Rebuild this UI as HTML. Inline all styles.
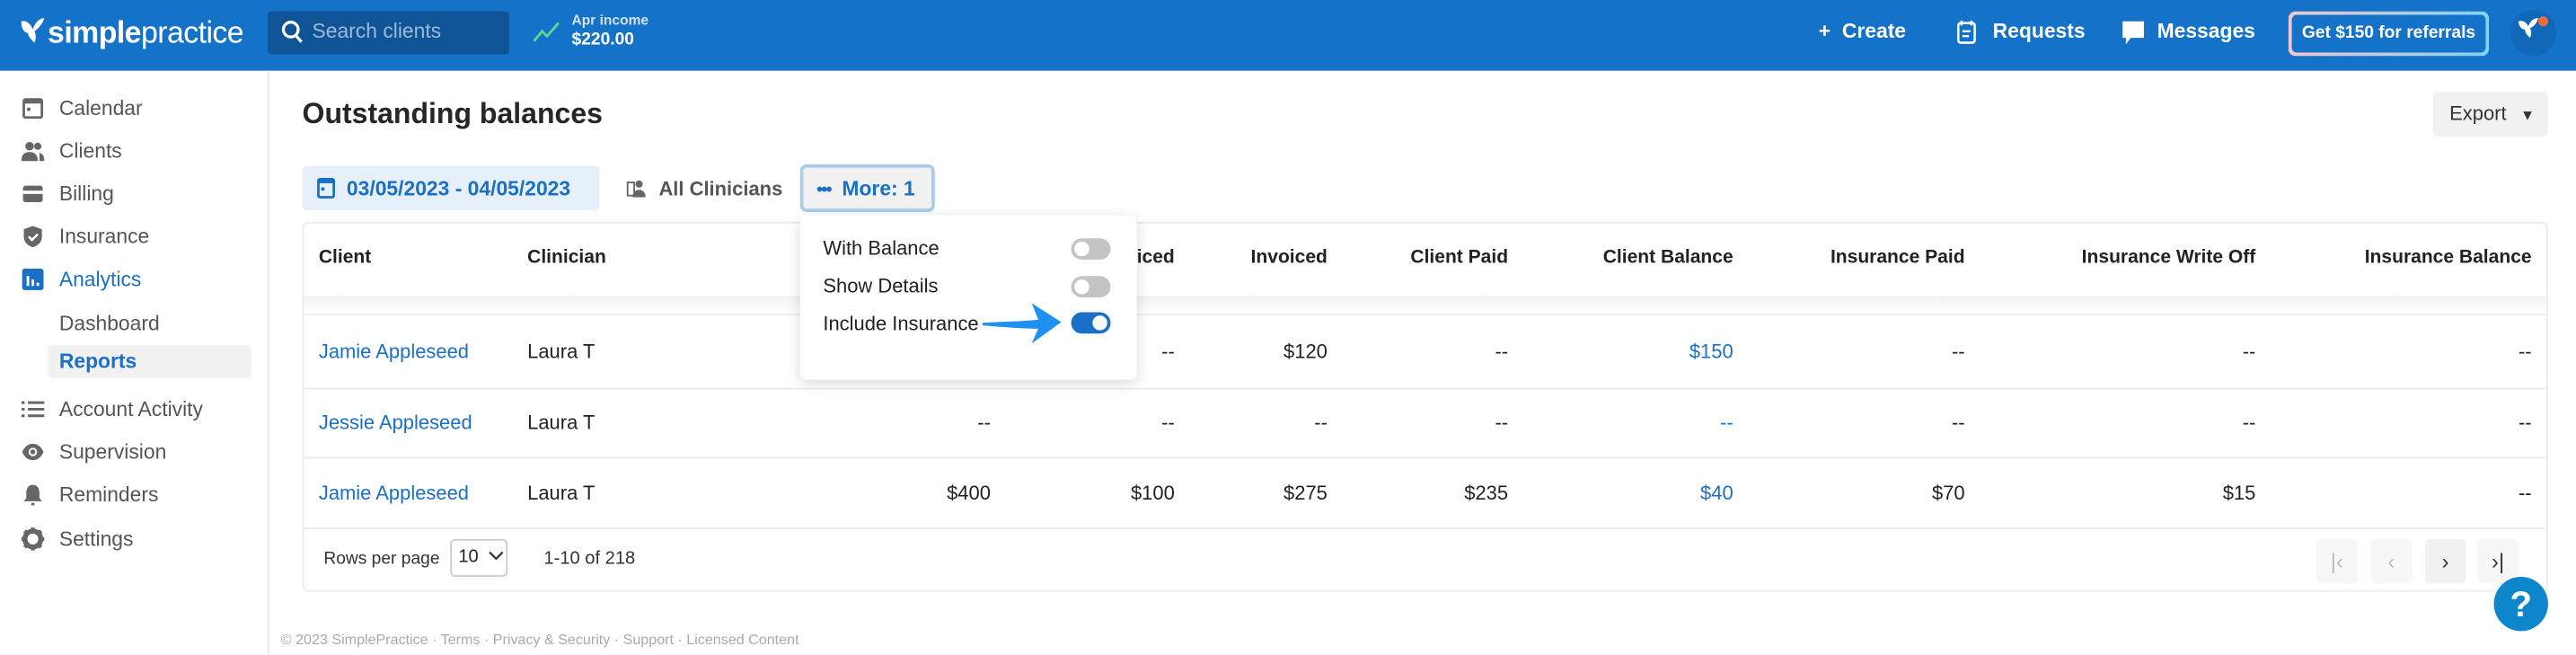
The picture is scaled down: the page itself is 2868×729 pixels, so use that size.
<!DOCTYPE html>
<html><head><meta charset="utf-8"><style>
*{box-sizing:border-box;margin:0;padding:0}
html,body{width:2868px;height:728px;overflow:hidden;background:#fff}
#w{position:absolute;left:0;top:0;width:1568px;height:398px;transform:scale(1.82908);transform-origin:0 0;font-family:"Liberation Sans",sans-serif;color:#222;font-size:12px}
.a{position:absolute;white-space:nowrap}
.nav{position:absolute;left:0;top:0;width:1568px;height:42.6px;background:#1572c9}
.w{color:#fff}
.side{color:#555;font-size:12.5px}
.ico{position:absolute;left:13px;width:14px;height:14px}
.th{font-weight:bold;font-size:11.5px;color:#222}
.r{text-align:right;transform:translateX(-100%)}
.bl{color:#1a6fc6}
.line{position:absolute;left:184px;width:1367px;height:1px;background:#ececec}
.tg{position:absolute;left:652px;width:24px;height:13px;border-radius:7px;background:#c4c4c4}
.tg:after{content:"";position:absolute;left:2px;top:2px;width:9px;height:9px;border-radius:50%;background:#fff}
.tg.on{background:#1a6fc6}
.tg.on:after{left:13px}
.pb{position:absolute;top:328px;width:25px;height:27px;border-radius:3px;background:#f7f7f7;color:#bbb;text-align:center;line-height:27px;font-size:13px}
</style></head><body><div id="w">
<div class="nav"></div>
<svg class="a" style="left:12px;top:10px" width="18" height="18" viewBox="0 0 18 18"><path d="M1 3c3-1 6 2 7 5 1-4 4-7 7-7-1 3-3 6-6 8 1 2 1 5 0 7-2-2-4-4-4-6-2 0-4-2-4-7z" fill="#fff"/></svg>
<div class="a w" style="left:29px;top:9px;font-size:18.5px;letter-spacing:-0.3px"><b>simple</b>practice</div>
<div class="a" style="left:163px;top:6.5px;width:147px;height:26px;background:#0f5497;border-radius:2px"></div>
<svg class="a" style="left:171px;top:12px" width="14" height="15" viewBox="0 0 14 15"><circle cx="6" cy="6" r="4.5" fill="none" stroke="#fff" stroke-width="1.8"/><path d="M9 9.5l3.5 4" stroke="#fff" stroke-width="1.8"/></svg>
<div class="a" style="left:190px;top:12px;font-size:12.5px;color:#9fb8d6">Search clients</div>
<svg class="a" style="left:324px;top:13px" width="18" height="14"><path d="M1 12l5-6 3 3 7-8" fill="none" stroke="#5fd39a" stroke-width="1.6"/></svg>
<div class="a w" style="left:348px;top:7px;font-size:8.5px;font-weight:bold;color:#cfe1f5">Apr income</div>
<div class="a w" style="left:348px;top:18px;font-size:10.5px;font-weight:bold">$220.00</div>
<div class="a w" style="left:1107px;top:12px;font-size:12.5px;font-weight:bold">+&nbsp; Create</div>
<svg class="a" style="left:1191px;top:12px" width="12" height="15"><rect x="1" y="2" width="10" height="12" rx="1.5" fill="none" stroke="#fff" stroke-width="1.4"/><path d="M3 0.5v3M9 0.5v3M3.5 7h5M3.5 10h4" stroke="#fff" stroke-width="1.3"/></svg>
<div class="a w" style="left:1213px;top:12px;font-size:12.5px;font-weight:bold">Requests</div>
<svg class="a" style="left:1291px;top:12px" width="15" height="16"><path d="M1 1h13v10H6l-3 4v-4H1z" fill="#fff"/></svg>
<div class="a w" style="left:1313px;top:12px;font-size:12.5px;font-weight:bold">Messages</div>
<div class="a" style="left:1393px;top:6.5px;width:122px;height:27px;border-radius:4px;padding:2px;background:linear-gradient(90deg,#f4c6cf,#7fd3ef)"><div style="width:100%;height:100%;background:#1572c9;border-radius:3px;color:#fff;font-size:10.5px;font-weight:bold;text-align:center;line-height:23px">Get $150 for referrals</div></div>
<div class="a" style="left:1528px;top:6px;width:28px;height:28px;border-radius:50%;background:#1268b8"></div>
<svg class="a" style="left:1531px;top:9px" width="22" height="20"><path d="M2 4c3-1 5 1 6 3 1-3 3-5 6-5-1 3-2 5-5 6 1 2 1 4 0 6-2-2-3-3-3-5-2 0-4-2-4-5z" fill="#fff"/><circle cx="17" cy="4" r="3" fill="#f36b3c"/></svg>

<div class="a" style="left:163px;top:42.6px;width:1px;height:356px;background:#ececec"></div>
<svg class="ico" style="top:59px" viewBox="0 0 14 14"><rect x="1.5" y="1.5" width="11" height="11" rx="1" fill="none" stroke="#666" stroke-width="1.5"/><rect x="1.5" y="1.5" width="11" height="2.5" fill="#666"/><rect x="3.5" y="6.5" width="2" height="2" fill="#666"/></svg>
<div class="a side" style="left:36px;top:59px">Calendar</div>
<svg class="ico" style="top:85px" viewBox="0 0 14 14"><circle cx="5" cy="4" r="2.6" fill="#666"/><path d="M0 13c0-4 2-5.5 5-5.5s5 1.5 5 5.5z" fill="#666"/><circle cx="10" cy="4" r="2.2" fill="#666"/><path d="M11 8c2 .5 3 2 3 5h-3z" fill="#666"/></svg>
<div class="a side" style="left:36px;top:85px">Clients</div>
<svg class="ico" style="top:111px" viewBox="0 0 14 14"><rect x="1" y="2" width="12" height="10" rx="1.5" fill="#666"/><rect x="1" y="5" width="12" height="2" fill="#fff"/></svg>
<div class="a side" style="left:36px;top:111px">Billing</div>
<svg class="ico" style="top:137px" viewBox="0 0 14 14"><path d="M7 0.5l5.5 2v4.5c0 3.5-2.5 5.5-5.5 6.5C4 12.5 1.5 10.5 1.5 7V2.5z" fill="#666"/><path d="M4.5 7l2 2 3.5-3.5" fill="none" stroke="#fff" stroke-width="1.4"/></svg>
<div class="a side" style="left:36px;top:137px">Insurance</div>
<svg class="ico" style="top:163px" viewBox="0 0 14 14"><rect x="0.5" y="0.5" width="13" height="13" rx="1.5" fill="#1a6fc6"/><path d="M4 5v6M7 7v4M10 9v2" stroke="#fff" stroke-width="1.6"/></svg>
<div class="a side bl" style="left:36px;top:163px">Analytics</div>
<div class="a side" style="left:36px;top:190px">Dashboard</div>
<div class="a" style="left:29px;top:209.5px;width:124px;height:20px;background:#f1f1f1;border-radius:3px"></div>
<div class="a side bl" style="left:36px;top:213px;font-weight:bold">Reports</div>
<svg class="ico" style="top:242px" viewBox="0 0 14 14"><path d="M0 3h2M4 3h10M0 7h2M4 7h10M0 11h2M4 11h10" stroke="#666" stroke-width="1.6"/></svg>
<div class="a side" style="left:36px;top:242px">Account Activity</div>
<svg class="ico" style="top:268px" viewBox="0 0 14 14"><path d="M0.5 7C2 3.5 4.5 2 7 2s5 1.5 6.5 5C12 10.5 9.5 12 7 12S2 10.5 0.5 7z" fill="#666"/><circle cx="7" cy="7" r="2.6" fill="#fff"/><circle cx="7" cy="7" r="1.5" fill="#666"/></svg>
<div class="a side" style="left:36px;top:268px">Supervision</div>
<svg class="ico" style="top:294px" viewBox="0 0 14 14"><path d="M7 1c3 0 4 2.5 4 5v3l1.5 2h-11L3 9V6c0-2.5 1-5 4-5z" fill="#666"/><rect x="6" y="12" width="2" height="1.5" fill="#666"/></svg>
<div class="a side" style="left:36px;top:294px">Reminders</div>
<svg class="ico" style="top:321px" viewBox="0 0 14 14"><circle cx="7" cy="7" r="4.8" fill="none" stroke="#666" stroke-width="3"/><path d="M7 0v3M7 11v3M0 7h3M11 7h3M2 2l2 2M10 10l2 2M12 2l-2 2M2 12l2-2" stroke="#666" stroke-width="2.4"/></svg>
<div class="a side" style="left:36px;top:321px">Settings</div>

<div class="a" style="left:184px;top:59px;font-size:17.5px;font-weight:bold;color:#262626">Outstanding balances</div>
<div class="a" style="left:1481px;top:56px;width:70px;height:27px;background:#f1f1f1;border-radius:3px;font-size:12px;line-height:27px;padding-left:10px;color:#333">Export <span style="font-size:9px;margin-left:5px">▼</span></div>

<div class="a" style="left:184px;top:101px;width:181px;height:27px;background:#e6f0fa;border-radius:3px"></div>
<svg class="a" style="left:193px;top:108px" width="11" height="13"><rect x="0.8" y="1" width="9.4" height="11" rx="1" fill="none" stroke="#1a6fc6" stroke-width="1.5"/><rect x="0.8" y="1" width="9.4" height="2.5" fill="#1a6fc6"/><rect x="2.5" y="6" width="2" height="2" fill="#1a6fc6"/></svg>
<div class="a bl" style="left:211px;top:108px;font-size:12.5px;font-weight:bold">03/05/2023 - 04/05/2023</div>
<svg class="a" style="left:381px;top:108px" width="12" height="12"><rect x="1" y="3" width="4" height="8" fill="none" stroke="#666"/><circle cx="8" cy="4" r="2.2" fill="#666"/><path d="M4 12c0-3 2-4.5 4-4.5s4 1.5 4 4.5z" fill="#666"/></svg>
<div class="a" style="left:401px;top:108px;font-size:12px;font-weight:bold;color:#555">All Clinicians</div>
<div class="a" style="left:487px;top:100px;width:82px;height:29px;border:2px solid #a9cbed;border-radius:4px;background:#f1f1f1"></div>
<div class="a bl" style="left:497px;top:108px;font-size:12.5px;font-weight:bold"><span style="letter-spacing:-1px;font-size:11px">•••</span>&nbsp; More: 1</div>

<div class="a" style="left:184px;top:135px;width:1367px;height:225px;border:1px solid #ececec;border-radius:4px"></div>
<div class="a" style="left:185px;top:180px;width:1365px;height:10px;background:linear-gradient(#f2f2f2,#fff)"></div>
<div class="line" style="top:191px"></div>
<div class="line" style="top:236px"></div>
<div class="line" style="top:278px"></div>
<div class="line" style="top:321px"></div>

<div class="a th" style="left:194px;top:151px">Client</div>
<div class="a th" style="left:321px;top:151px">Clinician</div>
<div class="a th r" style="left:715px;top:151px">Uninvoiced</div>
<div class="a th r" style="left:808px;top:151px">Invoiced</div>
<div class="a th r" style="left:918px;top:151px">Client Paid</div>
<div class="a th r" style="left:1055px;top:151px">Client Balance</div>
<div class="a th r" style="left:1196px;top:151px">Insurance Paid</div>
<div class="a th r" style="left:1373px;top:151px">Insurance Write Off</div>
<div class="a th r" style="left:1541px;top:151px">Insurance Balance</div>

<div class="a bl" style="left:194px;top:207px">Jamie Appleseed</div><div class="a" style="left:321px;top:207px">Laura T</div>
<div class="a r" style="left:603px;top:207px">$50</div><div class="a r" style="left:715px;top:207px">--</div><div class="a r" style="left:808px;top:207px">$120</div><div class="a r" style="left:918px;top:207px">--</div><div class="a r bl" style="left:1055px;top:207px">$150</div><div class="a r" style="left:1196px;top:207px">--</div><div class="a r" style="left:1373px;top:207px">--</div><div class="a r" style="left:1541px;top:207px">--</div>
<div class="a bl" style="left:194px;top:250px">Jessie Appleseed</div><div class="a" style="left:321px;top:250px">Laura T</div>
<div class="a r" style="left:603px;top:250px">--</div><div class="a r" style="left:715px;top:250px">--</div><div class="a r" style="left:808px;top:250px">--</div><div class="a r" style="left:918px;top:250px">--</div><div class="a r bl" style="left:1055px;top:250px">--</div><div class="a r" style="left:1196px;top:250px">--</div><div class="a r" style="left:1373px;top:250px">--</div><div class="a r" style="left:1541px;top:250px">--</div>
<div class="a bl" style="left:194px;top:293px">Jamie Appleseed</div><div class="a" style="left:321px;top:293px">Laura T</div>
<div class="a r" style="left:603px;top:293px">$400</div><div class="a r" style="left:715px;top:293px">$100</div><div class="a r" style="left:808px;top:293px">$275</div><div class="a r" style="left:918px;top:293px">$235</div><div class="a r bl" style="left:1055px;top:293px">$40</div><div class="a r" style="left:1196px;top:293px">$70</div><div class="a r" style="left:1373px;top:293px">$15</div><div class="a r" style="left:1541px;top:293px">--</div>

<div class="a" style="left:197px;top:334px;font-size:10.5px;color:#333">Rows per page</div>
<div class="a" style="left:274px;top:328px;width:35px;height:23px;border:1px solid #ccc;border-radius:3px;font-size:11px;line-height:21px;padding-left:4px">10 <svg width="10" height="7" style="margin-left:3px"><path d="M1 1l4 4 4-4" fill="none" stroke="#333" stroke-width="1.2"/></svg></div>
<div class="a" style="left:331px;top:334px;font-size:11px;color:#333">1-10 of 218</div>
<div class="pb" style="left:1410px">|‹</div><div class="pb" style="left:1443px">‹</div>
<div class="pb" style="left:1476px;background:#f1f1f1;color:#333">›</div><div class="pb" style="left:1508px;color:#333">›|</div>
<div class="a" style="left:1518px;top:351px;width:33px;height:33px;border-radius:50%;background:#0e86cc;color:#fff;font-weight:bold;font-size:22px;text-align:center;line-height:33px">?</div>

<div class="a" style="left:171px;top:384px;font-size:8.8px;color:#aaa">© 2023 SimplePractice · Terms · Privacy &amp; Security · Support · Licensed Content</div>

<div class="a" style="left:487px;top:131px;width:205px;height:100px;background:#fff;border-radius:4px;box-shadow:0 2px 8px rgba(0,0,0,.15)"></div>
<div class="a" style="left:501px;top:144px;font-size:12px">With Balance</div>
<div class="tg" style="top:144.5px"></div>
<div class="a" style="left:501px;top:167px;font-size:12px">Show Details</div>
<div class="tg" style="top:167.5px"></div>
<div class="a" style="left:501px;top:190px;font-size:12px">Include Insurance</div>
<div class="tg on" style="top:190px"></div>
<svg class="a" style="left:596px;top:182px" width="56" height="30"><path d="M2 14.5c14-1 26-1 34-2l-4-10 18 11.5-18 13 4-9c-10 0-22-1-34-2z" fill="#1e90f0"/></svg>
</div>
</body></html>
